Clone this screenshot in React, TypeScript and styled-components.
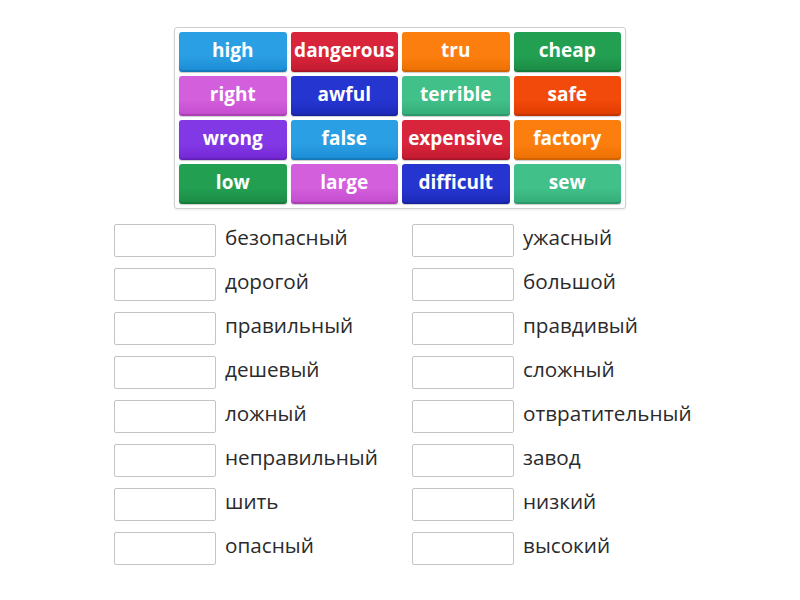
import React from "react";
import styled, { createGlobalStyle } from "styled-components";

const GlobalStyle = createGlobalStyle`
  html, body { margin: 0; padding: 0; background: #ffffff; }
  body { font-family: "Open Sans", "DejaVu Sans", sans-serif; }
`;

const Page = styled.div`
  width: 800px;
  height: 600px;
  display: flex;
  flex-direction: column;
  align-items: center;
  padding-top: 27px;
  box-sizing: border-box;
`;

const Bank = styled.div`
  width: 452px;
  box-sizing: border-box;
  border: 1px solid #cfcfcf;
  border-radius: 3px;
  padding: 4px;
  display: grid;
  grid-template-columns: repeat(4, 1fr);
  grid-auto-rows: 40px;
  gap: 4px;
  background: #fff;
  box-shadow: 0 1px 2px rgba(0, 0, 0, 0.08);
`;

const Tile = styled.div<{ $c: string; $d: string }>`
  display: flex;
  align-items: center;
  justify-content: center;
  border-radius: 3px;
  background: linear-gradient(to bottom, ${(p) => p.$c} 0%, ${(p) => p.$c} 60%, ${(p) => p.$d} 100%);
  box-shadow: inset 0 -2px 0 rgba(0, 0, 0, 0.12), 0 1px 1px rgba(0, 0, 0, 0.2);
  color: #ffffff;
  font-family: "Open Sans", sans-serif;
  font-weight: 700;
  font-size: 19px;
  line-height: 1;
  padding-bottom: 3px;
  box-sizing: border-box;
  white-space: nowrap;
`;

const Targets = styled.div`
  margin-top: 15px;
  display: grid;
  grid-template-columns: 298px 298px;
  grid-auto-flow: column;
  grid-template-rows: repeat(8, 33px);
  row-gap: 11px;
  width: 596px;
  margin-left: 24px;
`;

const Row = styled.div`
  display: flex;
  align-items: center;
  gap: 9px;
`;

const Box = styled.div`
  width: 102px;
  height: 33px;
  box-sizing: border-box;
  border: 1px solid #c4c4c4;
  border-radius: 2px;
  background: #fff;
  flex-shrink: 0;
`;

const Label = styled.span`
  font-family: "Open Sans", sans-serif;
  font-size: 20.7px;
  color: #2b2b2b;
  line-height: 1;
  padding-bottom: 7px;
  white-space: nowrap;
`;

const C = {
  blue: ["#2b9fe3", "#1a8bd4"],
  red: ["#d8253b", "#c2192f"],
  orange: ["#fb7e0e", "#ec6f02"],
  green: ["#239f52", "#1a8a44"],
  magenta: ["#d35fdc", "#c24bcd"],
  navy: ["#2536d0", "#1b28b8"],
  teal: ["#41c08a", "#33ac78"],
  orangered: ["#f24a0a", "#dd3b00"],
  purple: ["#8338e6", "#7226d4"],
};

const tiles: [string, keyof typeof C][] = [
  ["high", "blue"],
  ["dangerous", "red"],
  ["tru", "orange"],
  ["cheap", "green"],
  ["right", "magenta"],
  ["awful", "navy"],
  ["terrible", "teal"],
  ["safe", "orangered"],
  ["wrong", "purple"],
  ["false", "blue"],
  ["expensive", "red"],
  ["factory", "orange"],
  ["low", "green"],
  ["large", "magenta"],
  ["difficult", "navy"],
  ["sew", "teal"],
];

const words = [
  "безопасный",
  "дорогой",
  "правильный",
  "дешевый",
  "ложный",
  "неправильный",
  "шить",
  "опасный",
  "ужасный",
  "большой",
  "правдивый",
  "сложный",
  "отвратительный",
  "завод",
  "низкий",
  "высокий",
];

export default function App() {
  return (
    <>
      <GlobalStyle />
      <Page>
        <Bank>
          {tiles.map(([t, c]) => (
            <Tile key={t} $c={C[c][0]} $d={C[c][1]}>
              {t}
            </Tile>
          ))}
        </Bank>
        <Targets>
          {words.map((w) => (
            <Row key={w}>
              <Box />
              <Label>{w}</Label>
            </Row>
          ))}
        </Targets>
      </Page>
    </>
  );
}
